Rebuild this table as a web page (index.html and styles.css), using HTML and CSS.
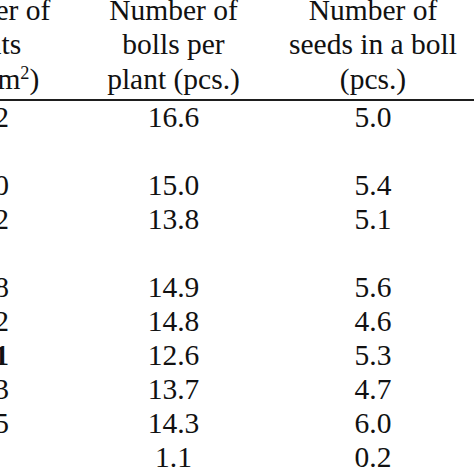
FILE: index.html
```html
<!DOCTYPE html>
<html>
<head>
<meta charset="utf-8">
<link rel="stylesheet" href="styles.css">
</head>
<body>
<div class="frame">
  <table class="data">
    <colgroup>
      <col class="c1"><col class="c2"><col class="c3">
    </colgroup>
    <thead>
      <tr>
        <th>Number of<br>plants<br>(pcs./m<sup>2</sup>)</th>
        <th>Number of<br>bolls per<br>plant (pcs.)</th>
        <th>Number of<br>seeds in a boll<br>(pcs.)</th>
      </tr>
    </thead>
    <tbody>
      <tr><td class="first">4.2</td><td>16.6</td><td>5.0</td></tr>
      <tr><td class="first">&nbsp;</td><td></td><td></td></tr>
      <tr><td class="first">5.0</td><td>15.0</td><td>5.4</td></tr>
      <tr><td class="first">4.2</td><td>13.8</td><td>5.1</td></tr>
      <tr><td class="first">&nbsp;</td><td></td><td></td></tr>
      <tr><td class="first">4.8</td><td>14.9</td><td>5.6</td></tr>
      <tr><td class="first">4.2</td><td>14.8</td><td>4.6</td></tr>
      <tr><td class="first bold">5.1</td><td>12.6</td><td>5.3</td></tr>
      <tr><td class="first">4.3</td><td>13.7</td><td>4.7</td></tr>
      <tr><td class="first">4.5</td><td>14.3</td><td>6.0</td></tr>
      <tr><td class="first">&nbsp;</td><td>1.1</td><td>0.2</td></tr>
    </tbody>
  </table>
</div>
</body>
</html>
```

FILE: styles.css
```css
html, body {
  margin: 0;
  padding: 0;
  background: #ffffff;
}
body {
  width: 474px;
  height: 474px;
  overflow: hidden;
}
.frame {
  width: 474px;
  height: 474px;
  overflow: hidden;
}
.data {
  border-collapse: collapse;
  table-layout: fixed;
  width: 599px;
  margin-left: -114px;
  margin-top: -7px;
  font-family: "Liberation Serif", "Times New Roman", serif;
  font-size: 29.5px;
  line-height: 33.9px;
  color: #111111;
}
.c1 { width: 200px; }
.c2 { width: 175px; }
.c3 { width: 224px; }
.data th {
  font-weight: normal;
  text-align: center;
  line-height: 34.3px;
  padding: 0 0 3px 0;
  border-bottom: 2px solid #1e1e1e;
  vertical-align: top;
}
.data td {
  text-align: center;
  padding: 0;
  height: 34px;
}
.data td.first {
  padding-left: 9px;
}
.data td.bold {
  font-weight: bold;
}
.data sup {
  font-size: 0.62em;
  line-height: 0;
  vertical-align: 0.55em;
}
```
